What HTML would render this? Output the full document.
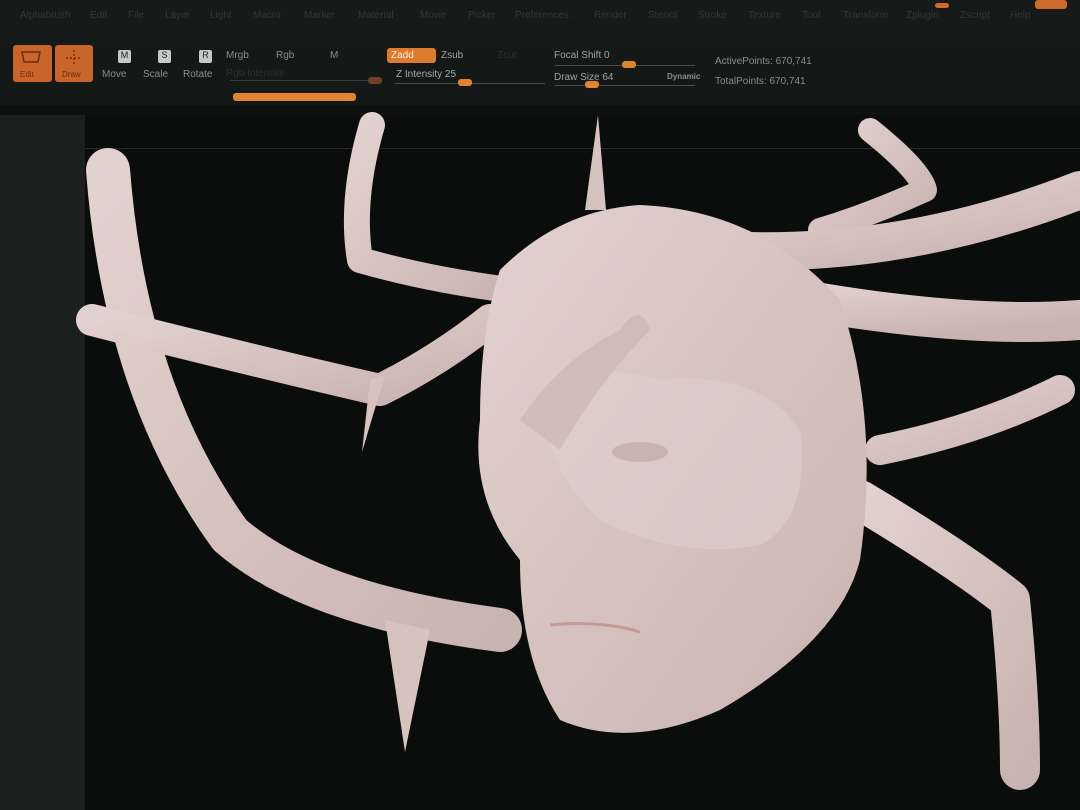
<!DOCTYPE html>
<html><head><meta charset="utf-8"><style>
html,body{margin:0;padding:0;width:1080px;height:810px;overflow:hidden;background:#111514;font-family:"Liberation Sans",sans-serif}
.t{position:absolute;font-size:10px;color:#8a8d88;white-space:nowrap}
.m{position:absolute;top:10px;font-size:10px;color:#343835}
.btn{position:absolute;background:#d06a28;border-radius:3px}
</style></head><body>
<div style="position:absolute;left:0;top:0;width:1080px;height:105px;background:linear-gradient(#161a18,#131715)"></div>
<div class="m" style="left:20px">Alphabrush</div><div class="m" style="left:90px">Edit</div><div class="m" style="left:128px">File</div><div class="m" style="left:165px">Layer</div><div class="m" style="left:210px">Light</div><div class="m" style="left:253px">Macro</div><div class="m" style="left:304px">Marker</div><div class="m" style="left:358px">Material</div><div class="m" style="left:420px">Movie</div><div class="m" style="left:468px">Picker</div><div class="m" style="left:515px">Preferences</div><div class="m" style="left:594px">Render</div><div class="m" style="left:648px">Stencil</div><div class="m" style="left:698px">Stroke</div><div class="m" style="left:748px">Texture</div><div class="m" style="left:802px">Tool</div><div class="m" style="left:843px">Transform</div><div class="m" style="left:906px">Zplugin</div><div class="m" style="left:960px">Zscript</div><div class="m" style="left:1010px">Help</div>
<div class="btn" style="left:1035px;top:0;width:32px;height:9px"></div>
<div class="btn" style="left:935px;top:3px;width:14px;height:5px"></div>
<div class="btn" style="left:13px;top:45px;width:39px;height:37px;background:#c9652a"></div>
<div class="btn" style="left:55px;top:45px;width:38px;height:37px;background:#c9652a"></div>
<svg width="100" height="40" style="position:absolute;left:13px;top:45px">
<path d="M9 7 L27 7 L25 17 L11 17 Z" fill="none" stroke="#6a2d10" stroke-width="1.5"/>
<path d="M61 5 V21 M53 13 H69" stroke="#6a2d10" stroke-width="1.5" stroke-dasharray="2 2"/>
</svg>
<div class="t" style="left:20px;top:70px;font-size:8px;color:#6a2d10">Edit</div>
<div class="t" style="left:62px;top:70px;font-size:8px;color:#6a2d10">Draw</div>
<div style="position:absolute;left:118px;top:50px;width:13px;height:13px;background:#c8c8c8;border-radius:2px;font-size:9px;text-align:center;color:#222">M</div>
<div style="position:absolute;left:158px;top:50px;width:13px;height:13px;background:#c8c8c8;border-radius:2px;font-size:9px;text-align:center;color:#222">S</div>
<div style="position:absolute;left:199px;top:50px;width:13px;height:13px;background:#c8c8c8;border-radius:2px;font-size:9px;text-align:center;color:#222">R</div>
<div class="t" style="left:102px;top:69px">Move</div><div class="t" style="left:143px;top:69px">Scale</div><div class="t" style="left:183px;top:69px">Rotate</div>
<div class="t" style="left:226px;top:50px">Mrgb</div><div class="t" style="left:276px;top:50px">Rgb</div><div class="t" style="left:330px;top:50px">M</div>
<div class="t" style="left:226px;top:68px;color:#2d302d">Rgb Intensity</div>
<div style="position:absolute;left:230px;top:80px;width:150px;height:1px;background:#3a3a38"></div>
<div class="btn" style="left:368px;top:77px;width:14px;height:7px;background:#6d4128"></div>
<div class="btn" style="left:233px;top:93px;width:123px;height:8px;background:#e0842e"></div>
<div class="btn" style="left:387px;top:48px;width:49px;height:15px;background:#dd7a2c"></div>
<div class="t" style="left:391px;top:50px;color:#fff2e0">Zadd</div><div class="t" style="left:441px;top:50px;color:#a0a39e">Zsub</div><div class="t" style="left:497px;top:50px;color:#2d302d">Zcut</div>
<div class="t" style="left:396px;top:69px;color:#a8aba6">Z Intensity 25</div>
<div style="position:absolute;left:395px;top:83px;width:150px;height:1px;background:#4a4c48"></div>
<div class="btn" style="left:458px;top:79px;width:14px;height:7px;background:#e0842e"></div>
<div class="t" style="left:554px;top:50px;color:#a0a39e">Focal Shift 0</div>
<div style="position:absolute;left:555px;top:65px;width:140px;height:1px;background:#4a4c48"></div>
<div class="btn" style="left:622px;top:61px;width:14px;height:7px;background:#e0842e"></div>
<div class="t" style="left:554px;top:72px;color:#a0a39e">Draw Size 64</div>
<div style="position:absolute;left:555px;top:85px;width:140px;height:1px;background:#4a4c48"></div>
<div class="btn" style="left:585px;top:81px;width:14px;height:7px;background:#e0842e"></div>
<div class="t" style="left:667px;top:72px;font-size:8px;font-weight:bold;color:#8a8d88">Dynamic</div>
<div class="t" style="left:715px;top:56px">ActivePoints: 670,741</div>
<div class="t" style="left:715px;top:76px">TotalPoints: 670,741</div>
<div style="position:absolute;left:0;top:105px;width:1080px;height:705px;background:#0e1110"></div>
<div style="position:absolute;left:0;top:115px;width:85px;height:695px;background:#1b1f1d"></div>
<div style="position:absolute;left:85px;top:115px;width:995px;height:695px;background:#0b0d0c"></div>
<div style="position:absolute;left:85px;top:148px;width:995px;height:1px;background:#262a28"></div>
<svg width="1080" height="810" style="position:absolute;left:0;top:0">
<defs><linearGradient id="g" x1="0" y1="0" x2="1" y2="1"><stop offset="0" stop-color="#e2d2cf"/><stop offset="1" stop-color="#c9b3b0"/></linearGradient></defs>
<g fill="none" stroke="url(#g)" stroke-linecap="round" stroke-linejoin="round">
<path d="M108 170 Q125 390 230 535 Q310 605 500 630" stroke-width="44"/>
<path d="M92 320 Q250 360 380 390 Q440 360 490 320" stroke-width="32"/>
<path d="M372 125 Q350 200 360 260 Q430 280 510 290" stroke-width="26"/>
<path d="M870 130 Q920 170 925 190 Q870 215 820 230" stroke-width="24"/>
<path d="M720 250 Q900 260 1080 190" stroke-width="38"/>
<path d="M750 290 Q950 330 1080 320" stroke-width="40"/>
<path d="M880 450 Q980 430 1060 390" stroke-width="30"/>
<path d="M860 500 Q960 560 1010 600 Q1020 700 1020 770" stroke-width="40"/>
</g>
<g fill="#d6c3c0">
<path d="M370 380 L385 375 L362 452 Z"/>
<path d="M385 620 L430 630 L405 752 Z"/>
<path d="M585 210 L598 115 L606 210 Z"/>
</g>
<path d="M500 270 Q560 210 640 205 Q760 210 840 300 Q880 420 860 560 Q840 640 720 710 Q630 750 560 720 Q520 660 520 560 Q470 500 480 420 Q480 330 500 270 Z" fill="url(#g)"/>
<path d="M540 390 Q600 360 660 380 Q760 370 800 430 Q810 520 760 545 Q680 560 600 520 Q545 470 540 390 Z" fill="#ddd0cd" opacity="0.6"/>
<path d="M520 420 Q560 360 620 330 Q640 300 650 330 Q600 380 560 450 Z" fill="#cbb6b3" opacity="0.7"/>
<ellipse cx="640" cy="452" rx="28" ry="10" fill="#c9b3b0"/>
<path d="M550 625 Q600 620 640 632" stroke="#c69a94" stroke-width="3" fill="none"/>
</svg>
</body></html>
